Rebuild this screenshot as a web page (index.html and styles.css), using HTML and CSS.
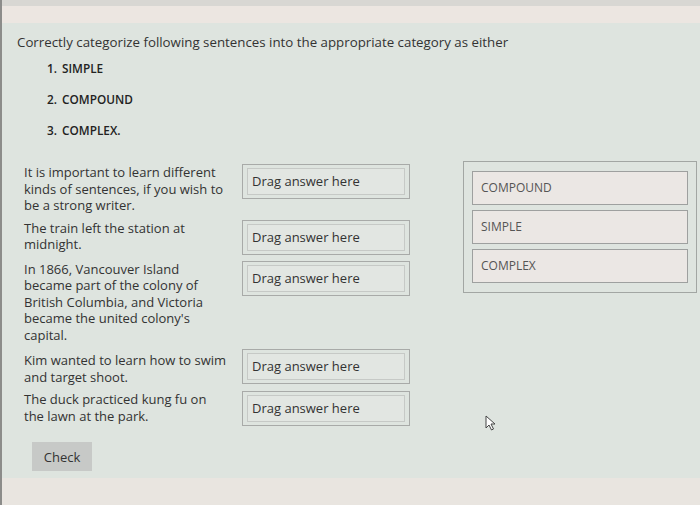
FILE: index.html
```html
<!DOCTYPE html>
<html>
<head>
<meta charset="utf-8">
<link rel="stylesheet" href="styles.css">
</head>
<body>
<div class="screen">
  <div class="topbar"></div>
  <div class="band"></div>
  <div class="panel">
    <p class="title">Correctly categorize following sentences into the appropriate category as either</p>
    <ol class="cats">
      <li>SIMPLE</li>
      <li>COMPOUND</li>
      <li>COMPLEX.</li>
    </ol>
    <div class="task">
      <div class="rows">
        <div class="row">
          <div class="sentence">It is important to learn different<br>kinds of sentences, if you wish to<br>be a strong writer.</div>
          <div class="drop"><div class="slot">Drag answer here</div></div>
        </div>
        <div class="row">
          <div class="sentence">The train left the station at<br>midnight.</div>
          <div class="drop"><div class="slot">Drag answer here</div></div>
        </div>
        <div class="row">
          <div class="sentence">In 1866, Vancouver Island<br>became part of the colony of<br>British Columbia, and Victoria<br>became the united colony's<br>capital.</div>
          <div class="drop"><div class="slot">Drag answer here</div></div>
        </div>
        <div class="row">
          <div class="sentence lowered">Kim wanted to learn how to swim<br>and target shoot.</div>
          <div class="drop"><div class="slot">Drag answer here</div></div>
        </div>
        <div class="row">
          <div class="sentence">The duck practiced kung fu on<br>the lawn at the park.</div>
          <div class="drop"><div class="slot">Drag answer here</div></div>
        </div>
      </div>
      <div class="pool">
        <div class="chip">COMPOUND</div>
        <div class="chip">SIMPLE</div>
        <div class="chip">COMPLEX</div>
      </div>
    </div>
    <button class="check">Check</button>
    <svg class="cursor" width="12" height="16" viewBox="0 0 12 16"><path d="M1 1 L1 13 L4 10 L6.5 15 L8.5 14 L6 9 L10 9 Z" fill="#fff" stroke="#444" stroke-width="1"/></svg>
  </div>
</div>
</body>
</html>
```
FILE: styles.css
```css
html, body {
  margin: 0;
  padding: 0;
}
body {
  width: 700px;
  height: 505px;
  overflow: hidden;
  background: #e9e5e0;
  font-family: "Open Sans", "Liberation Sans", sans-serif;
  color: #333;
}
.screen {
  border-left: 2px solid #8c8c8a;
  height: 505px;
  box-sizing: border-box;
}
.topbar {
  height: 6px;
  background: #d8d7d3;
}
.band {
  height: 17px;
  background: #ece6e1;
}
.panel {
  position: relative;
  height: 455px;
  background: #dee4df;
  padding: 11px 0 0 15px;
  box-sizing: border-box;
}
.title {
  margin: 0;
  font-size: 13.3px;
  line-height: 16px;
  color: #333;
}
.cats {
  margin: 10px 0 0 0;
  padding-left: 43px;
  font-size: 11.8px;
  font-weight: 600;
  color: #222;
}
.cats li {
  line-height: 16px;
  margin-bottom: 15px;
  padding-left: 2px;
}
.cats li:last-child {
  margin-bottom: 0;
}
.task {
  display: flex;
  align-items: flex-start;
  margin-top: 26px;
}
.rows {
  display: flex;
  flex-direction: column;
  gap: 6px;
  padding-left: 7px;
}
.row {
  display: grid;
  grid-template-columns: 218px 168px;
  align-items: start;
}
.sentence {
  font-size: 13px;
  line-height: 16.5px;
  color: #333;
}
.sentence.lowered {
  padding-top: 3px;
}
.drop {
  height: 35px;
  box-sizing: border-box;
  border: 1px solid #a8aaa8;
  padding: 3px 4px;
}
.slot {
  height: 100%;
  box-sizing: border-box;
  border: 1px solid #c6c9c6;
  background: #e2e6e2;
  font-size: 13px;
  line-height: 25px;
  padding-left: 4px;
  color: #333;
}
.pool {
  margin-left: 53px;
  margin-top: -3px;
  width: 234px;
  box-sizing: border-box;
  border: 1px solid #a2a6a3;
  padding: 9px 8px;
  display: flex;
  flex-direction: column;
  gap: 5px;
}
.chip {
  height: 34px;
  box-sizing: border-box;
  border: 1px solid #9ea09f;
  background: #ebe7e4;
  font-size: 12px;
  line-height: 32px;
  padding-left: 8px;
  color: #555;
}
.check {
  display: block;
  margin: 16px 0 0 15px;
  width: 60px;
  height: 29px;
  border: none;
  background: #c7c9c7;
  font-family: "Open Sans", "Liberation Sans", sans-serif;
  font-size: 13px;
  color: #333;
  padding: 0;
}
.cursor {
  position: absolute;
  left: 483px;
  top: 392px;
}
```
